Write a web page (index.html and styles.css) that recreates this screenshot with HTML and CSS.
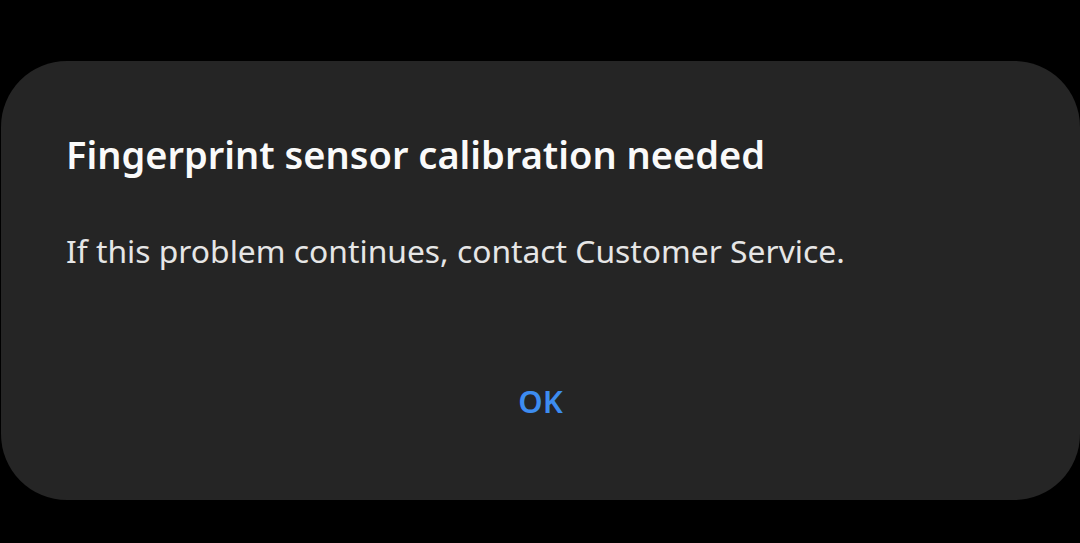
FILE: index.html
```html
<!DOCTYPE html>
<html lang="en">
<head>
  <meta charset="UTF-8">
  <meta name="viewport" content="width=device-width, initial-scale=1.0">
  <title>Fingerprint</title>
  <link rel="stylesheet" href="styles.css">
</head>
<body>

<div class="dialog">
  <h1 class="dialog-title">Fingerprint sensor calibration needed</h1>
  <p class="dialog-text">If this problem continues, contact Customer Service.</p>
  <div class="dialog-buttons">
    <button class="dialog-button">OK</button>
  </div>
</div>

</body>
</html>
```

FILE: styles.css
```css
body {
  font-family: "Noto Sans", "Open Sans", sans-serif;
  margin: 0;
  background-color: #000000;
  overflow: hidden;
  height: 543px;
}

.dialog {
  margin-top: 61px;
  margin-left: 1px;
  width: 1079px;
  height: 439px;
  box-sizing: border-box;
  background-color: #252525;
  border-radius: 66px;
  padding: 74px 0 0 65px;
  display: flex;
  flex-direction: column;
}

.dialog-title {
  margin: 0;
  font-size: 38px;
  font-weight: 600;
  color: #fafafa;
  line-height: 38px;
}

.dialog-text {
  margin: 0;
  margin-top: 58px;
  font-size: 31.8px;
  font-weight: 400;
  color: #e6e6e6;
  line-height: 40px;
}

.dialog-buttons {
  display: flex;
  justify-content: center;
  margin-top: 110px;
  margin-left: -65px;
}

.dialog-button {
  font-family: inherit;
  background: none;
  border: none;
  padding: 0;
  font-size: 31px;
  font-weight: 600;
  color: #3d8cf0;
  line-height: 40px;
  cursor: pointer;
}
```
